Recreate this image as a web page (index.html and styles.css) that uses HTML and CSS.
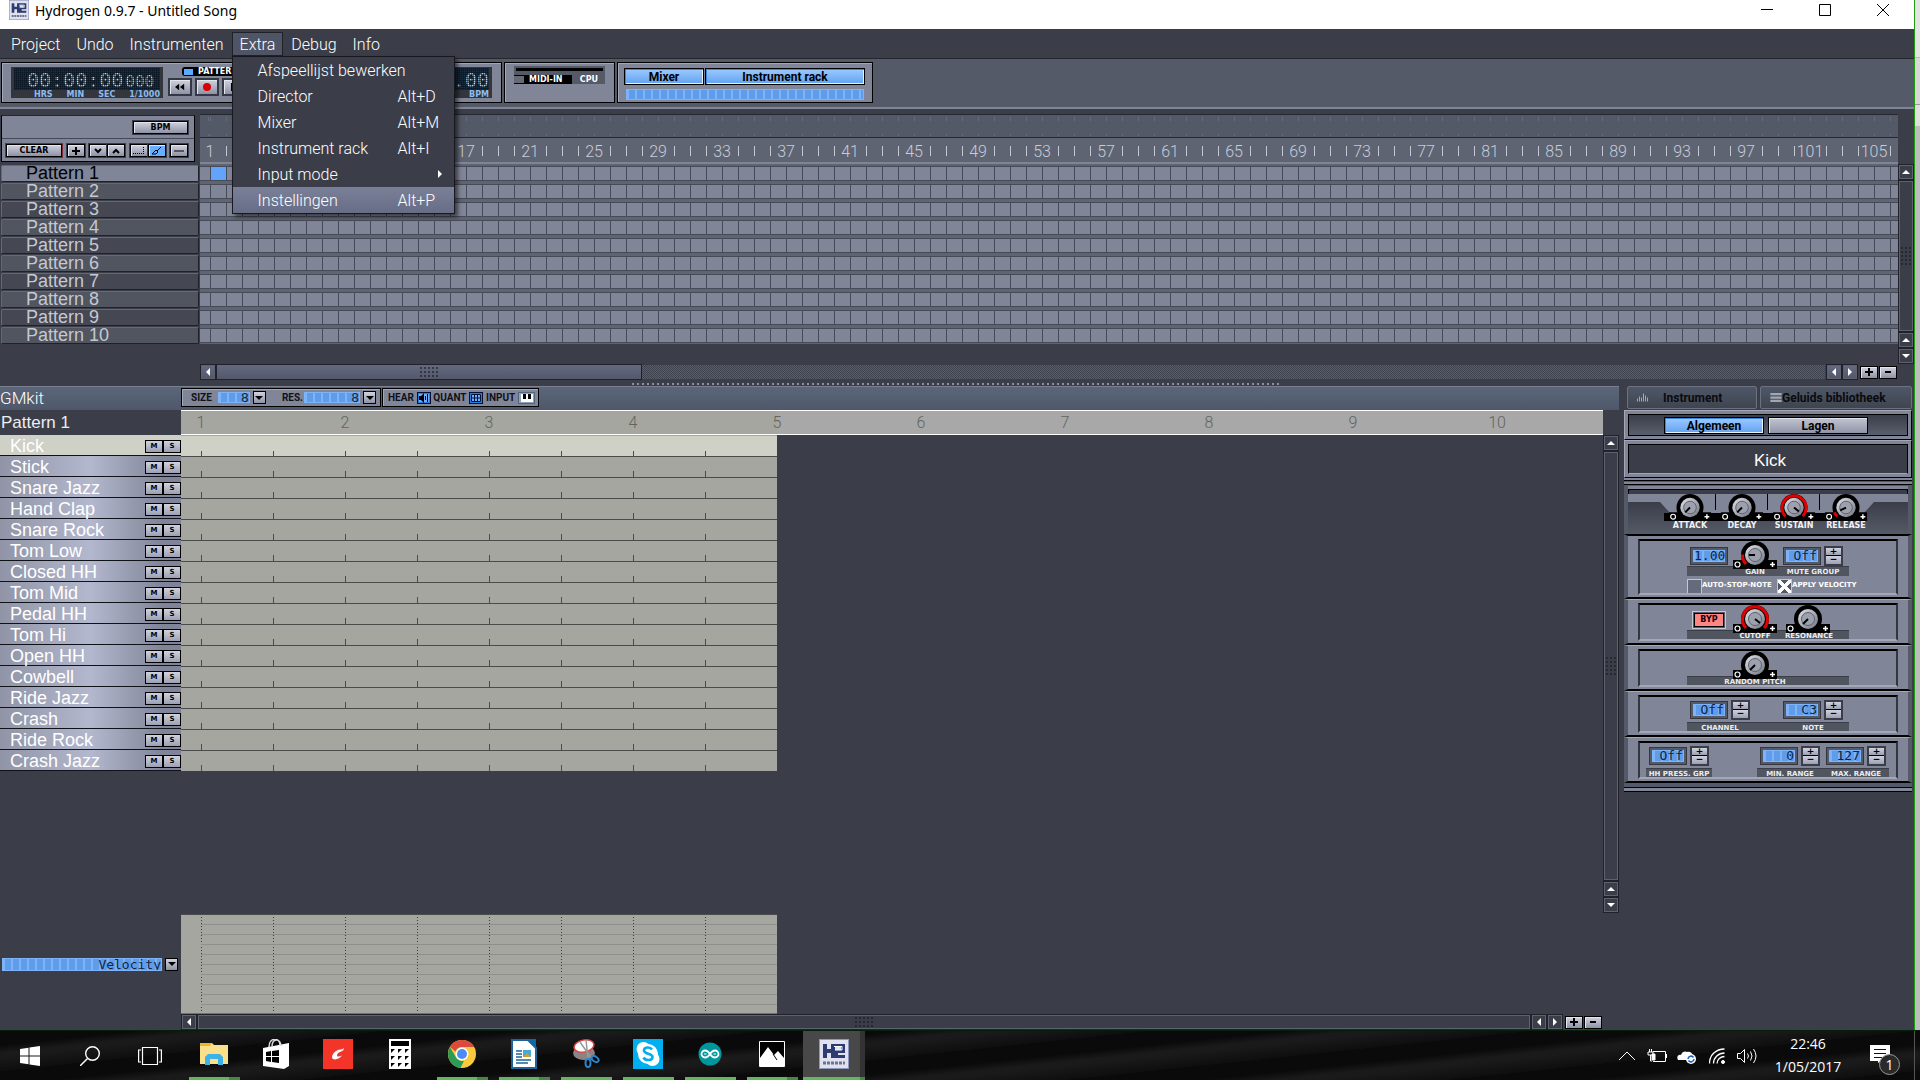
FILE: index.html
```html
<!DOCTYPE html>
<html lang="nl">
<head>
    <meta charset="UTF-8">
    <meta name="viewport" content="width=device-width, initial-scale=1.0">
    <title>Hydrogen 0.9.7 - Untitled Song</title>
    <link rel="stylesheet" href="styles.css">
</head>
<body>
    <!-- shared shapes -->
    <svg class="defs" aria-hidden="true">
        <defs>
            <linearGradient id="knob-face" x1="0" y1="0" x2="1" y2="1">
                <stop offset="0" stop-color="#e2e4ea"/>
                <stop offset="1" stop-color="#6f7380"/>
            </linearGradient>
            <symbol id="knob" viewBox="0 0 44 29">
                <path d="M0 19h44v9H0z" fill="#000"/>
                <circle cx="22" cy="14" r="14" fill="#000"/>
                <circle cx="4.500" cy="23.500" r="2.500" fill="none" stroke="#fff" stroke-width="1.200"/>
                <path d="M37 23.500h5M39.500 21v5" stroke="#fff" stroke-width="1.500"/>
            </symbol>
            <symbol id="knob-cap" viewBox="0 0 44 29">
                <circle cx="22" cy="14" r="10" fill="url(#knob-face)"/>
                <circle cx="22" cy="14" r="6.500" fill="#9da1ad" stroke="#5d616d"/>
            </symbol>
            <symbol id="h2" viewBox="0 0 30 30">
                <rect x=".5" y=".5" width="29" height="29" fill="#dfe2ee" stroke="#8d97bd"/>
                <path d="M4 5h4v5h4V5h4v14h-4v-5H8v5H4z" fill="#2c3c72"/>
                <path d="M15 5h11v9h-7v2h7v3H15v-8h7V8h-7z" fill="#2c3c72"/>
                <path d="M15 7.500h8v3.500h-7" fill="none" stroke="#fff" stroke-width="1"/>
                <path d="M4 24h22" stroke="#6b7590" stroke-width="3" stroke-dasharray="3 1"/>
            </symbol>
        </defs>
    </svg>

    <div class="desktop">
        <div class="window">
            <header class="titlebar">
                <svg class="app-icon" viewBox="0 0 30 30"><use href="#h2"/></svg>
                <span class="title">Hydrogen 0.9.7 - Untitled Song</span>
                <button class="win-btn" aria-label="Minimaliseren"><svg viewBox="0 0 12 12"><path d="M0 5.500h12"/></svg></button>
                <button class="win-btn" aria-label="Maximaliseren"><svg viewBox="0 0 12 12"><path d="M.5.5h11v11H.5z"/></svg></button>
                <button class="win-btn" aria-label="Sluiten"><svg viewBox="0 0 12 12"><path d="M0 0l12 12M12 0L0 12"/></svg></button>
            </header>

            <nav class="menubar">
                <button>Project</button>
                <button>Undo</button>
                <button>Instrumenten</button>
                <div class="menu-open">
                    <button class="active">Extra</button>
                    <ul class="dropdown">
                        <li><button><span>Afspeellijst bewerken</span></button></li>
                        <li><button><span>Director</span><kbd>Alt+D</kbd></button></li>
                        <li><button><span>Mixer</span><kbd>Alt+M</kbd></button></li>
                        <li><button><span>Instrument rack</span><kbd>Alt+I</kbd></button></li>
                        <li><button><span>Input mode</span><i class="submenu"></i></button></li>
                        <li><button class="selected"><span>Instellingen</span><kbd>Alt+P</kbd></button></li>
                    </ul>
                </div>
                <button>Debug</button>
                <button>Info</button>
            </nav>

            <section class="toolbar">
                <div class="panel player">
                    <div class="display clock">
                        <div class="dots"><span>00:00:00</span><small>000</small></div>
                        <div class="units"><span>HRS</span><span>MIN</span><span>SEC</span><span>1/1000</span></div>
                    </div>
                    <div class="transport">
                        <div class="mode"><i class="led"></i>PATTERN</div>
                        <div class="keys">
                            <button class="key" aria-label="Terug"><svg viewBox="0 0 12 8"><path d="M5 0v8L0 4zM11 0v8L6 4z"/></svg></button>
                            <button class="key" aria-label="Opnemen"><svg viewBox="0 0 8 8"><circle cx="4" cy="4" r="4" fill="#d80000"/></svg></button>
                            <button class="key" aria-label="Pauze"><svg viewBox="0 0 8 8"><path d="M1 0h2v8H1zM5 0h2v8H5z"/></svg></button>
                        </div>
                    </div>
                    <div class="display tempo">
                        <div class="dots"><span>120.00</span></div>
                        <div class="units"><span>BPM</span></div>
                    </div>
                </div>
                <div class="panel status">
                    <div class="cpu-bar"></div>
                    <div class="status-row"><span class="midi"><i></i>MIDI-IN</span><span class="cpu">CPU</span></div>
                </div>
                <div class="panel views">
                    <div class="view-buttons">
                        <button class="blue-btn mixer-btn">Mixer</button>
                        <button class="blue-btn rack-btn">Instrument rack</button>
                    </div>
                    <div class="lcd"></div>
                </div>
            </section>

            <section class="song">
                <div class="song-tools">
                    <div class="tool-row bpm-row"><button class="btn wide">BPM</button></div>
                    <div class="tool-row">
                        <button class="btn clear">CLEAR</button>
                        <button class="btn" aria-label="Nieuw patroon"><svg viewBox="0 0 16 12"><path d="M4 6h8M8 2v8"/></svg></button>
                        <span class="pair">
                            <button class="btn" aria-label="Omlaag"><svg viewBox="0 0 16 12"><path d="M5 4l3 3 3-3"/></svg></button>
                            <button class="btn" aria-label="Omhoog"><svg viewBox="0 0 16 12"><path d="M5 8l3-3 3 3"/></svg></button>
                        </span>
                        <span class="pair">
                            <button class="btn" aria-label="Selecteren"><svg viewBox="0 0 16 12"><path d="M2 8.500h10M12.500 2v8" stroke-width="1" stroke-dasharray="1 1"/></svg></button>
                            <button class="btn on" aria-label="Tekenen"><svg viewBox="0 0 16 12"><path d="M3 9h4l2-2-2-2zM8 6l4-4" stroke-width="1"/></svg></button>
                        </span>
                        <button class="btn" aria-label="Modus"><svg viewBox="0 0 16 12"><path d="M3 6h10" stroke-width="1"/></svg></button>
                    </div>
                </div>
                <div class="timeline">
                    <div class="tempo-track"></div>
                    <div class="bars" id="bars"></div>
                </div>
                <ul class="patterns" id="patterns"></ul>
                <div class="song-grid" id="song-grid"></div>
                <div class="vscroll song-vscroll">
                    <button class="arrow up" aria-label="Omhoog"></button>
                    <div class="track"><i class="grip"></i></div>
                    <button class="arrow up" aria-label="Omhoog"></button>
                    <button class="arrow down" aria-label="Omlaag"></button>
                </div>
                <div class="hscroll song-hscroll">
                    <button class="arrow left" aria-label="Links"></button>
                    <div class="track hatched"><div class="thumb"><i class="grip"></i></div></div>
                    <button class="arrow left" aria-label="Links"></button>
                    <button class="arrow right" aria-label="Rechts"></button>
                    <button class="btn zoom" aria-label="Inzoomen"><svg viewBox="0 0 16 12"><path d="M4 6h8M8 2v8"/></svg></button>
                    <button class="btn zoom" aria-label="Uitzoomen"><svg viewBox="0 0 16 12"><path d="M5 6h6"/></svg></button>
                </div>
            </section>

            <div class="splitter"></div>

            <div class="lower">
                <section class="editor">
                    <div class="kit">GMkit</div>
                    <div class="editor-bar">
                        <div class="panel">
                            <label for="size">SIZE</label>
                            <select id="size" class="lcd size"><option>8</option></select><span class="combo"></span>
                            <label for="res" class="res-label">RES.</label>
                            <select id="res" class="lcd res"><option>8</option></select><span class="combo"></span>
                        </div>
                        <div class="panel toggles">
                            <label for="hear">HEAR</label>
                            <button id="hear" class="toggle"><svg viewBox="0 0 12 10"><path d="M1 3h2l3-3v10L3 7H1zM7 3h1v4H7zM9 1h1v8H9z"/></svg></button>
                            <label for="quant">QUANT</label>
                            <button id="quant" class="toggle"><svg viewBox="0 0 12 10"><path d="M1.500 1.500h9v7h-9zM4.500 1.500v7M7.500 1.500v7M1.500 5h9" fill="none" stroke="#001038"/></svg></button>
                            <label for="input">INPUT</label>
                            <button id="input" class="toggle piano"><svg viewBox="0 0 12 10"><path d="M0 1h12v8H0z" fill="#fff"/><path d="M2 1h3v5H2zM7 1h3v5H7z"/></svg></button>
                        </div>
                    </div>
                    <div class="pattern-name">Pattern 1</div>
                    <div class="ruler"><div class="used"></div><div class="beats" id="beats"></div></div>
                    <ul class="instruments" id="instruments"></ul>
                    <div class="notes" id="notes"></div>
                    <div class="vscroll editor-vscroll">
                        <button class="arrow up" aria-label="Omhoog"></button>
                        <div class="track"><i class="grip"></i></div>
                        <button class="arrow up" aria-label="Omhoog"></button>
                        <button class="arrow down" aria-label="Omlaag"></button>
                    </div>
                    <div class="property">
                        <select class="lcd" aria-label="Eigenschap"><option>Velocity</option></select><span class="combo"></span>
                    </div>
                    <div class="velocity"></div>
                    <div class="hscroll editor-hscroll">
                        <button class="arrow left" aria-label="Links"></button>
                        <div class="track"><i class="grip"></i></div>
                        <button class="arrow left" aria-label="Links"></button>
                        <button class="arrow right" aria-label="Rechts"></button>
                        <button class="btn zoom" aria-label="Inzoomen"><svg viewBox="0 0 16 12"><path d="M4 6h8M8 2v8"/></svg></button>
                        <button class="btn zoom" aria-label="Uitzoomen"><svg viewBox="0 0 16 12"><path d="M5 6h6"/></svg></button>
                    </div>
                </section>

                <aside class="rack">
                    <div class="tabs">
                        <button class="tab"><svg viewBox="0 0 12 8"><path d="M.5 5v3M2.500 3v5M4.500 4v4M6.500 0v8M8.500 2v6M10.500 4v4"/></svg><span>Instrument</span></button>
                        <button class="tab library"><svg viewBox="0 0 10 8"><path d="M0 1h10M0 4h10M0 7h10" stroke-width="2"/></svg><span>Geluids bibliotheek</span></button>
                    </div>
                    <div class="rack-frame">
                        <div class="subtabs">
                            <button class="blue-btn">Algemeen</button>
                            <button class="blue-btn grey">Lagen</button>
                        </div>
                    </div>
                    <div class="rack-frame">
                        <div class="instrument-name">Kick</div>
                    </div>
                    <div class="rack-gap"></div>
                    <div class="envelope">
                        <div class="slot"></div>
                        <div class="knobs">
                            <div class="shelf"></div>
                            <div class="env">
                                <svg class="knob" viewBox="0 0 44 29"><use href="#knob"/><use href="#knob-cap"/><path class="hand" d="M22 14l-5 5"/></svg>
                                <span>ATTACK</span>
                            </div>
                            <div class="env">
                                <svg class="knob" viewBox="0 0 44 29"><use href="#knob"/><use href="#knob-cap"/><path class="hand" d="M22 14l-5 5"/></svg>
                                <span>DECAY</span>
                            </div>
                            <div class="env">
                                <svg class="knob" viewBox="0 0 44 29"><use href="#knob"/><path class="arc" d="M13 23a12.500 12.500 0 1 1 18 0"/><use href="#knob-cap"/><path class="hand" d="M22 14l5 4"/></svg>
                                <span>SUSTAIN</span>
                            </div>
                            <div class="env">
                                <svg class="knob" viewBox="0 0 44 29"><use href="#knob"/><path class="arc" d="M13 23a12.500 12.500 0 0 1-3-4"/><use href="#knob-cap"/><path class="hand" d="M22 14l-6 3"/></svg>
                                <span>RELEASE</span>
                            </div>
                        </div>
                    </div>

                    <div class="rack-section">
                        <div class="rack-box">
                            <div class="controls three">
                                <span class="lcd-frame"><output class="lcd">1.00</output></span>
                                <svg class="knob" viewBox="0 0 44 29"><use href="#knob"/><path class="arc" d="M13 23a12.500 12.500 0 0 1-3.500-9.500"/><use href="#knob-cap"/><path class="hand" d="M22 14h-6"/></svg>
                                <span class="stepper"><span class="lcd-frame"><output class="lcd">Off</output></span><span class="spin"><button>+</button><button>−</button></span></span>
                            </div>
                            <div class="plate three"><span></span><span>GAIN</span><span>MUTE GROUP</span></div>
                            <div class="checks">
                                <label><input type="checkbox">AUTO-STOP-NOTE</label>
                                <label><input type="checkbox" checked>APPLY VELOCITY</label>
                            </div>
                        </div>
                    </div>

                    <div class="rack-section">
                        <div class="rack-box">
                            <div class="controls three">
                                <button class="bypass">BYP</button>
                                <svg class="knob" viewBox="0 0 44 29"><use href="#knob"/><path class="arc" d="M13 23a12.500 12.500 0 1 1 18 0"/><use href="#knob-cap"/><path class="hand" d="M22 14l5 4"/></svg>
                                <svg class="knob centred" viewBox="0 0 44 29"><use href="#knob"/><use href="#knob-cap"/><path class="hand" d="M22 14l-5 5"/></svg>
                            </div>
                            <div class="plate three"><span></span><span>CUTOFF</span><span class="near">RESONANCE</span></div>
                        </div>
                    </div>

                    <div class="rack-section">
                        <div class="rack-box">
                            <div class="controls three">
                                <span></span>
                                <svg class="knob" viewBox="0 0 44 29"><use href="#knob"/><use href="#knob-cap"/><path class="hand" d="M22 14l-5 5"/></svg>
                            </div>
                            <div class="plate three"><span></span><span>RANDOM PITCH</span></div>
                        </div>
                    </div>

                    <div class="rack-section">
                        <div class="rack-box">
                            <div class="controls two">
                                <span class="stepper"><span class="lcd-frame"><output class="lcd">Off</output></span><span class="spin"><button>+</button><button>−</button></span></span>
                                <span class="stepper"><span class="lcd-frame"><output class="lcd">C3</output></span><span class="spin"><button>+</button><button>−</button></span></span>
                            </div>
                            <div class="plate two"><span>CHANNEL</span><span>NOTE</span></div>
                        </div>
                    </div>

                    <div class="rack-section">
                        <div class="rack-box ranges">
                            <div class="range">
                                <span class="stepper"><span class="lcd-frame"><output class="lcd">Off</output></span><span class="spin"><button>+</button><button>−</button></span></span>
                                <span class="plate">HH PRESS. GRP</span>
                            </div>
                            <div class="range">
                                <span class="stepper"><span class="lcd-frame"><output class="lcd">0</output></span><span class="spin"><button>+</button><button>−</button></span></span>
                                <span class="plate">MIN. RANGE</span>
                            </div>
                            <div class="range">
                                <span class="stepper"><span class="lcd-frame"><output class="lcd">127</output></span><span class="spin"><button>+</button><button>−</button></span></span>
                                <span class="plate">MAX. RANGE</span>
                            </div>
                        </div>
                    </div>
                    <div class="rack-foot"></div>
                </aside>
            </div>
        </div>
        <div class="behind"></div>
    </div>

    <footer class="taskbar">
        <button class="sys" aria-label="Start"><svg width="20" height="20" viewBox="0 0 20 20" fill="#fff"><path d="M0 3l8.500-1.200V9.500H0zM9.500 1.600L20 0v9.500H9.500zM0 10.500h8.500v7.700L0 17zM9.500 10.500H20V20L9.500 18.400z"/></svg></button>
        <button class="sys" aria-label="Zoeken"><svg width="20" height="20" viewBox="0 0 20 20" fill="none" stroke="#fff" stroke-width="1.400"><circle cx="12.500" cy="7.500" r="6.800"/><path d="M7.500 12.500L0 20"/></svg></button>
        <button class="sys" aria-label="Taakweergave"><svg width="24" height="18" viewBox="0 0 24 18" fill="none" stroke="#fff" stroke-width="1.200"><path d="M4.500.5h15v17h-15zM3 3H.6v12H3M21 3h2.400v12H21"/></svg></button>
        <div class="apps">
            <button class="app running more" aria-label="Verkenner"><svg width="28" height="24" viewBox="0 0 28 24"><path d="M0 1h12l2 2h14v19H0z" fill="#fbe08c"/><path d="M0 1h12l-2 3H0z" fill="#f0b429"/><path d="M5 23v-8l3-3h12l3 3v8h-5v-6h-8v6z" fill="#3cb2e6"/></svg></button>
            <button class="app" aria-label="Store"><svg width="26" height="30" viewBox="0 0 26 30"><path d="M0 9l26-5v23l-5 3L0 27z" fill="#fff"/><path d="M6 8c0-10 11-10 11-2M9 8c0-9 8-9 9-1" fill="none" stroke="#ddd" stroke-width="1.500"/><path d="M3 13l5-1v5H3zM9 12l7-1v6H9zM3 18h5v5l-5-1zM9 18h7v6l-7-1z" fill="#000"/></svg></button>
            <button class="app" aria-label="Cashback"><svg width="30" height="30" viewBox="0 0 30 30"><path d="M0 0h30v30H0z" fill="#f23528"/><path d="M19 10.500c-7-1-12 7-9 9.500 3 1.500 7-1 9-3.500-3 1.500-5 1.500-5-.5 0-1.500 2-3 4.500-3.500z" fill="#fff"/><path d="M18 11l3-2-1 3z" fill="#fff"/></svg></button>
            <button class="app" aria-label="Rekenmachine"><svg width="22" height="30" viewBox="0 0 22 30"><path d="M0 0h22v30H0z" fill="#fff"/><path d="M2 2h18v5H2zM2 10h4l-4 4zM9 10h4l-4 4zM16 10h4l-4 4zM2 17h4l-4 4zM9 17h4l-4 4zM16 17h4l-4 4zM2 24h4l-4 4zM9 24h4l-4 4zM16 24h4l-4 4z" fill="#000"/></svg></button>
            <button class="app running more" aria-label="Chrome"><svg width="28" height="28" viewBox="0 0 28 28"><circle cx="14" cy="14" r="14" fill="#fbc93c"/><path d="M2 7a14 14 0 0 1 24.300 0H14a7 7 0 0 0-6.500 4.500z" fill="#dc4a3d"/><path d="M2 7l6 10.500c1 2 4 4 8 3.300L12.500 28A14 14 0 0 1 2 7z" fill="#2a9c57"/><circle cx="14" cy="14" r="6.500" fill="#fff"/><circle cx="14" cy="14" r="5" fill="#4c8bf5"/></svg></button>
            <button class="app running more" aria-label="Writer"><svg width="26" height="30" viewBox="0 0 26 30"><path d="M2 1h15l8 8v20H1V1z" fill="#fff" stroke="#1c6499" stroke-width="2"/><path d="M17 0h8v9z" fill="#0c6aa8"/><path d="M5 12h6M5 15h6M5 18h6M5 21h15M5 24h12" stroke="#1c6499" stroke-width="1.500"/><path d="M12 11h8v7h-8z" fill="#48a9d8"/><path d="M12 18l4-4 4 4z" fill="#c9a227"/></svg></button>
            <button class="app running" aria-label="Knipprogramma"><svg width="28" height="30" viewBox="0 0 28 30"><ellipse cx="12" cy="14" rx="11" ry="7" fill="#8b8386"/><ellipse cx="12" cy="7" rx="10" ry="6" fill="#fff" stroke="#d44" stroke-width="1.500" transform="rotate(-12 12 7)"/><path d="M8 3l12 17M14 1l2 19" stroke="#999" stroke-width="1.500"/><g fill="none" stroke="#2a86cc" stroke-width="2"><ellipse cx="16" cy="24" rx="2.500" ry="4"/><ellipse cx="23" cy="20" rx="4" ry="2.500" transform="rotate(35 23 20)"/></g></svg></button>
            <button class="app running" aria-label="Skype"><svg width="30" height="30" viewBox="0 0 30 30"><path d="M0 0h30v30H0z" fill="#00aff0"/><circle cx="10.500" cy="10" r="7" fill="#fff"/><circle cx="19.500" cy="20" r="7" fill="#fff"/><circle cx="15" cy="15" r="10" fill="#fff"/><path d="M19 10.500c-2-3-8-2.500-8 1 0 4 8.500 2.500 8.500 6.500 0 4-7 4-9 .5" fill="none" stroke="#00aff0" stroke-width="2.600"/></svg></button>
            <button class="app running" aria-label="Arduino"><svg width="24" height="24" viewBox="0 0 24 24"><circle cx="12" cy="12" r="11.500" fill="#00979c"/><path d="M12 12c-2-3-3.500-3.500-5-3.500a3.500 3.500 0 0 0 0 7c1.500 0 3-.5 5-3.500s3.500-3.500 5-3.500a3.500 3.500 0 0 1 0 7c-1.500 0-3-.5-5-3.500z" fill="none" stroke="#fff" stroke-width="1.800"/><path d="M6 12h2.500M15.500 12H18" stroke="#fff"/></svg></button>
            <button class="app running more" aria-label="Foto's"><svg width="26" height="26" viewBox="0 0 26 26"><path d="M.5.5h25v25H.5z" fill="#000" stroke="#fff"/><path d="M1 17l8-11 6 8 4-4 6 7v8H1z" fill="#fff"/><path d="M14 13l4 6" stroke="#000"/></svg></button>
            <button class="app running more current" aria-label="Hydrogen"><svg width="30" height="30" viewBox="0 0 30 30"><use href="#h2"/></svg></button>
        </div>
        <div class="tray">
            <button aria-label="Verborgen pictogrammen"><svg width="16" height="10" viewBox="0 0 16 10"><path d="M0 9l8-8 8 8"/></svg></button>
            <button aria-label="Batterij"><svg width="20" height="14" viewBox="0 0 20 14"><path d="M6 2.500h12.500v10H6M19.500 5v4M1 3h5v3H1zM2.500 0v3M4.500 0v3M3.500 6v6H5"/><path d="M5 5h3v6H5z" fill="#fff"/></svg></button>
            <button aria-label="OneDrive"><svg width="20" height="16" viewBox="0 0 20 16"><path d="M1 12c-2-4 1-6 3-5 1-4 5-4 6-3 4-1 6 2 5 4 2 0 2 4 0 4z" fill="#fff" stroke="none"/><circle cx="14" cy="11" r="5" fill="#fff" stroke="none"/><path d="M11 11a3 3 0 0 1 5.500-1.500M17 11a3 3 0 0 1-5.500 1.500" stroke="#1c62c4" stroke-width="1.500"/></svg></button>
            <button aria-label="Wi-Fi"><svg width="16" height="16" viewBox="0 0 16 16"><path d="M.5 15.500C.5 7 7 1 15.500 1M4.500 15.500c0-6 5-10.500 11-10.500M8 15.500c0-4 3.500-7 7.500-7" stroke-width="1.300"/><circle cx="14" cy="14" r="1.500" fill="#fff"/></svg></button>
            <button aria-label="Volume"><svg width="20" height="16" viewBox="0 0 20 16"><path d="M.5 5.500h3l4-4v13l-4-4h-3zM10.500 5.500q2 2.500 0 5M13.500 3.500q3 4.500 0 9M16.500 1q5 7 0 14"/></svg></button>
            <div class="time"><span>22:46</span><span>1/05/2017</span></div>
            <button class="notify" aria-label="Meldingen"><svg width="20" height="18" viewBox="0 0 20 18"><path d="M0 0h20v16h-9l-3 2v-2H0z" fill="#fff" stroke="none"/><path d="M4 4.500h12M4 8.500h12M4 12.500h8" stroke="#111"/></svg><span class="badge">1</span></button>
        </div>
    </footer>

    <script src="script.js"></script>
</body>
</html>
```

FILE: styles.css
```css
* {
    box-sizing: border-box;
}

body {
    margin: 0;
    min-height: 100vh;
    display: flex;
    flex-direction: column;
    background: #3b3e49;
    color: #fff;
    font-family: "Liberation Sans", Arial, sans-serif;
    font-size: 16px;
}

button, select {
    margin: 0;
    padding: 0;
    border: 0;
    border-radius: 0;
    background: none;
    color: inherit;
    font: inherit;
}

ul {
    margin: 0;
    padding: 0;
    list-style: none;
}

svg {
    display: block;
}

.defs {
    position: absolute;
    width: 0;
    height: 0;
}

.desktop {
    display: flex;
    flex: 1;
}

.window {
    display: flex;
    flex-direction: column;
    flex: 1;
    min-width: 0;
    border-right: 1px solid #1f9a12;
}

.behind {
    width: 5px;
    background: linear-gradient(#e4e4e4 0 57px, #bbb 57px 58px, #d8d8d8 58px 104px, #999 104px 105px, #e0e0e0 105px 126px, #bdbdbd 126px);
}

/* title bar */
.titlebar {
    display: flex;
    height: 29px;
    padding-right: 2px;
    background: #fff;
    color: #000;
    font-family: "Noto Sans", sans-serif;
    font-size: 14px;
}

.app-icon {
    width: 20px;
    height: 20px;
    margin: 0 6px 0 9px;
}

.title {
    flex: 1;
    line-height: 21px;
}

.win-btn {
    display: flex;
    justify-content: center;
    width: 58px;
    padding-top: 4px;
}

.win-btn svg {
    width: 12px;
    height: 12px;
    fill: none;
    stroke: #000;
}

/* menu */
.menubar {
    display: flex;
    align-items: flex-start;
    height: 30px;
    padding: 3px;
    border-bottom: 1px solid #25272f;
    font-family: Roboto, "Liberation Sans", sans-serif;
    font-weight: 300;
    font-size: 16px;
}

.menubar > button, .menu-open > button {
    height: 24px;
    padding: 0 7px;
    border: 1px solid transparent;
}

.menu-open {
    position: relative;
}

.menu-open > .active {
    background: #4f5466;
    border-color: #20222a;
}

.dropdown {
    position: absolute;
    z-index: 5;
    top: 24px;
    left: 0;
    width: 223px;
    border: 1px solid #17191f;
    background: #3b3e49;
    box-shadow: 3px 3px 4px #0008;
}

.dropdown button {
    display: flex;
    align-items: center;
    width: 100%;
    height: 26px;
    padding: 0 16px 0 25px;
    text-align: left;
}

.dropdown span {
    flex: 1;
}

.dropdown kbd {
    width: 40px;
    font: inherit;
}

.dropdown .selected {
    background: linear-gradient(#7b8099, #666d85);
}

.submenu {
    margin-right: -8px;
    border: 4px solid transparent;
    border-left-color: #fff;
}

/* toolbar */
.toolbar {
    display: flex;
    gap: 2px;
    height: 50px;
    padding: 3px 0 4px 1px;
    background: #555a68;
    border-bottom: 2px solid #7f8496;
}

.panel {
    background: #808597;
    border: 1px solid #000;
    box-shadow: inset 1px 1px #a4a8b6;
}

.player {
    display: flex;
    width: 501px;
    padding: 4px 9px;
}

.display {
    background: #33363b;
    padding: 1px 3px;
    color: #b8e0f8;
}

.display .dots {
    position: relative;
    display: flex;
    align-items: baseline;
    justify-content: flex-end;
    height: 22px;
    background: #16304a;
    font-family: "DejaVu Sans Mono", monospace;
    font-size: 20px;
    line-height: 24px;
}

.display .dots::after {
    content: "";
    position: absolute;
    inset: 0;
    background: repeating-linear-gradient(90deg, #0b131d90 0 1px, transparent 1px 2px), repeating-linear-gradient(#0b131d90 0 1px, transparent 1px 2px);
}

.clock .dots {
    justify-content: flex-start;
    gap: 2px;
    padding-left: 13px;
}

.dots small {
    font-size: 16px;
}

.units {
    display: flex;
    justify-content: space-between;
    padding-left: 20px;
    color: #8cbcf0;
    font: bold 8px/10px "DejaVu Sans", sans-serif;
}

.clock {
    width: 152px;
}

.transport {
    padding-left: 5px;
}

.mode {
    display: flex;
    align-items: center;
    width: 90px;
    height: 9px;
    margin-left: 14px;
    background: #000;
    border-radius: 3px;
    font: bold 8px "DejaVu Sans", sans-serif;
}

.led {
    width: 9px;
    height: 6px;
    margin: 0 5px 0 2px;
    background: #5aaaff;
}

.keys {
    display: flex;
    gap: 3px;
    padding-top: 2px;
}

.key, .btn {
    display: flex;
    align-items: center;
    justify-content: center;
    background: linear-gradient(#d0d2de, #8e92a6);
    border: 1px solid #000;
    color: #000;
    box-shadow: inset 1px 1px #e4e6ee;
}

.key {
    width: 24px;
    height: 18px;
    border: 2px solid #343844;
}

.key svg {
    width: 10px;
    height: 8px;
}

.tempo {
    margin-left: auto;
    width: 90px;
}

.tempo .units {
    justify-content: flex-end;
}

.status {
    width: 111px;
    padding: 3px 9px;
    font: bold 8px/9px "DejaVu Sans", sans-serif;
}

.cpu-bar {
    height: 7px;
    background: #000;
    border: 2px solid #555a68;
}

.status-row {
    display: flex;
    align-items: center;
    justify-content: space-between;
    padding-top: 2px;
    background: #555a68;
}

.midi {
    display: flex;
    align-items: center;
    gap: 5px;
    width: 58px;
    background: #000;
}

.midi i {
    width: 10px;
    height: 7px;
    background: #666a74;
}

.cpu {
    padding-right: 7px;
}

.views {
    width: 256px;
    padding: 5px 7px 0 6px;
}

.view-buttons {
    display: flex;
    gap: 1px;
}

.blue-btn {
    height: 17px;
    background: linear-gradient(#9ccaff, #62a2f0);
    border: 1px solid #000;
    box-shadow: inset 1px 1px #3a86e0, inset -1px -1px #e8f2ff;
    color: #000;
    font: bold 12px/14px Roboto, "Liberation Sans", sans-serif;
}

.mixer-btn {
    width: 80px;
}

.rack-btn {
    flex: 1;
}

.lcd {
    height: 11px;
    background: repeating-linear-gradient(90deg, #7fb3f7 0 2px, #5f9dea 2px 8px);
    border: 1px solid #7fb3f7;
    color: #10243e;
    font: 13px/10px "DejaVu Sans Mono", monospace;
    text-align: right;
}

.views .lcd {
    margin: 4px 1px 0 2px;
}

/* song editor */
.song {
    display: grid;
    grid-template-columns: 200px 1fr 16px;
    grid-template-rows: 55px 180px 36px;
}

.song-tools {
    grid-area: 1 / 1;
    margin: 6px 5px 2px 1px;
    background: #808597;
    border: 1px solid #000;
    border-top-color: #25272f;
}

.tool-row {
    display: flex;
    align-items: center;
    justify-content: space-between;
    height: 23px;
    padding: 0 6px 0 4px;
}

.tool-row.bpm-row {
    justify-content: flex-end;
    border-bottom: 1px solid #444857;
}

.btn {
    width: 18px;
    height: 13px;
    font: bold 8px "DejaVu Sans", sans-serif;
    outline: 1px solid #3a3d49;
}

.btn svg {
    width: 16px;
    height: 12px;
    fill: none;
    stroke: #000;
    stroke-width: 2;
}

.wide {
    width: 55px;
}

.clear {
    width: 56px;
    outline-color: #7d2a31;
}

.btn.on {
    background: #6aaeff;
}

.pair {
    display: flex;
}

.timeline {
    grid-area: 1 / 2;
    margin-top: 5px;
    border-top: 1px solid #25272f;
    overflow: hidden;
}

.tempo-track {
    height: 23px;
    background: repeating-linear-gradient(90deg, #666b7a 0 1px, transparent 1px 16px) 10px 2px / 100% 4px repeat-x, repeating-linear-gradient(90deg, #666b7a 0 1px, transparent 1px 16px) 10px 19px / 100% 2px repeat-x, #545967;
    border-bottom: 1px solid #25272f;
}

.bars {
    display: flex;
    height: 26px;
    margin-left: -22px;
    background: repeating-linear-gradient(90deg, #c4c8d2 0 1px, transparent 1px 16px) 0 8px / 100% 10px no-repeat, #5f6473;
    border-bottom: 2px solid #808597;
    color: #c8ccd8;
    font: 300 16px/27px Roboto, "Liberation Sans", sans-serif;
}

.bars div {
    flex: 0 0 64px;
    text-align: center;
}

.bars span {
    padding: 0 1px;
    background: #5f6473;
}

.patterns {
    grid-area: 2 / 1;
}

.patterns li {
    height: 17px;
    margin: 1px 1px 0;
    padding-left: 24px;
    background: #454852;
    border: 1px solid #20222a;
    border-top-color: #646978;
    border-left-color: #646978;
    border-radius: 2px;
    color: #c4c8d2;
    font-size: 18px;
    line-height: 15px;
}

.patterns li:nth-child(even) {
    background: #50555f;
}

.patterns li.active {
    background: #808597;
    color: #000;
}

.song-grid {
    grid-area: 2 / 2;
    padding-top: 2px;
    background: #5f6473;
    overflow: hidden;
}

.song-row {
    display: flex;
    height: 15px;
    margin-bottom: 3px;
    padding-left: 11px;
    background: repeating-linear-gradient(90deg, transparent 0 10px, #474a57 10px 11px, transparent 11px 16px), #808597;
    border-top: 1px solid #474a57;
    border-bottom: 1px solid #474a57;
}

.cell {
    width: 15px;
    background: #62a4fa;
}

/* scroll bars */
.vscroll, .hscroll {
    display: flex;
    gap: 2px;
    padding: 1px;
}

.vscroll {
    flex-direction: column;
}

.song-vscroll {
    grid-area: 2 / 3 / 4 / 4;
    margin-bottom: 16px;
}

.arrow, .track {
    display: flex;
    align-items: center;
    justify-content: center;
    background: #3b3e49;
    border: 1px solid #5d6172;
    outline: 1px solid #20222a;
}

.arrow {
    flex: none;
    width: 14px;
    height: 14px;
}

.arrow::before {
    content: "";
    border: 4px solid transparent;
}

.arrow.up::before {
    margin-bottom: 4px;
    border-bottom-color: #fff;
}

.arrow.down::before {
    margin-top: 4px;
    border-top-color: #fff;
}

.arrow.left::before {
    margin-right: 4px;
    border-right-color: #fff;
}

.arrow.right::before {
    margin-left: 4px;
    border-left-color: #fff;
}

.track {
    flex: 1;
}

.grip {
    width: 19px;
    height: 11px;
    background: radial-gradient(circle at 1px 1px, #191b22 1px, transparent 1px) 0 0 / 4px 4px;
    opacity: .6;
}

.vscroll .grip {
    width: 11px;
    height: 19px;
}

.song-hscroll {
    grid-area: 3 / 2;
    align-self: end;
    height: 16px;
}

.song-hscroll .arrow, .thumb {
    background: linear-gradient(#646980, #53586b);
}

.hatched {
    justify-content: flex-start;
    border: 0;
    outline: 0;
    background: repeating-conic-gradient(#585c6c 0 25%, #3f424f 0 50%) 0 0 / 2px 2px;
}

.thumb {
    display: flex;
    align-items: center;
    justify-content: center;
    width: calc(26% + 6px);
    height: 14px;
    outline: 1px solid #20222a;
}

.zoom {
    align-self: center;
    margin-left: 1px;
    outline: 0;
}

.zoom + .zoom {
    margin-left: -1px;
}

.splitter {
    height: 6px;
    margin: 0 33%;
    padding: 3px 0 1px;
    background: linear-gradient(90deg, #8d92a0 2px, transparent 2px) 0 0 / 5px 2px repeat-x content-box;
}

/* pattern editor */
.lower {
    display: flex;
    flex: 1;
    gap: 5px;
}

.editor {
    flex: 1;
    min-width: 0;
    display: grid;
    grid-template-columns: 181px 1fr 16px;
    grid-template-rows: 24px 25px 1fr 100px 16px;
}

.kit, .editor-bar {
    border-top: 1px solid #7b8090;
    background: linear-gradient(#5c667a, #4e586a);
}

.kit {
    font: 300 17px/23px Roboto, "Liberation Sans", sans-serif;
}

.editor-bar {
    grid-column: 2 / 4;
    display: flex;
    gap: 1px;
    padding: 1px 0 3px;
    color: #101218;
}

.editor-bar .panel {
    display: flex;
    align-items: center;
    width: 200px;
    padding: 0 4px 0 9px;
}

.editor-bar label {
    font: bold 10px Roboto, sans-serif;
}

.editor-bar .toggles {
    width: 157px;
    justify-content: space-between;
    padding: 0 3px 0 5px;
}

select.lcd {
    appearance: none;
    direction: rtl;
}

.size {
    width: 32px;
    margin-left: auto;
}

.res {
    width: 56px;
    margin-left: 1px;
}

.res-label {
    margin-left: 16px;
}

.combo {
    display: flex;
    align-items: center;
    justify-content: center;
    width: 13px;
    height: 13px;
    margin-left: 3px;
    background: linear-gradient(#d0d2de, #8e92a6);
    border: 1px solid #000;
}

.combo::before {
    content: "";
    border: 4px solid transparent;
    border-top-color: #000;
    border-bottom: 0;
}

.toggle {
    width: 14px;
    height: 12px;
    border: 1px solid #001038;
    background: #6ab0ff;
    box-shadow: inset 0 0 0 1px #2a7de0;
}

.toggle svg {
    width: 12px;
    height: 10px;
}

.piano {
    width: 17px;
    padding-left: 2px;
    background: #8ea2ba;
    border-color: #50657f;
    box-shadow: none;
}

.pattern-name {
    padding-left: 1px;
    font-size: 17px;
    line-height: 25px;
    color: #eceef2;
}

.ruler {
    grid-area: 2 / 2;
    position: relative;
    display: flex;
    background: #a8a8a8;
    border-top: 1px solid #fff;
    border-bottom: 1px solid #fff;
    overflow: hidden;
}

.used {
    width: 596px;
    background: #a5a6a0;
}

.beats {
    position: absolute;
    top: 0;
    left: -52px;
    display: flex;
    color: #62645f;
    font: 300 16px/23px Roboto, "Liberation Sans", sans-serif;
}

.beats span {
    width: 144px;
    text-align: center;
}

.instruments {
    grid-area: 3 / 1;
}

.instruments li {
    display: flex;
    align-items: center;
    height: 21px;
    padding-left: 10px;
    border-bottom: 1px solid #101218;
    background: linear-gradient(90deg, #9094a6, #b4b8ce 50%, #7f8498 90%);
    font-size: 18px;
    line-height: 20px;
}

.instruments li.active {
    background: #cfd0c6;
}

.instruments span {
    flex: 1;
    padding-top: 2px;
    line-height: 18px;
}

.instruments button {
    width: 18px;
    height: 13px;
    margin-top: 2px;
    border: 1px solid #000;
    background: linear-gradient(#d0d2de, #9ca0b2);
    color: #000;
    font: bold 7px/10px "DejaVu Sans", sans-serif;
}

.notes {
    grid-area: 3 / 2;
}

.note-row {
    width: 596px;
    height: 21px;
    background: #a5a6a0;
    border-bottom: 1px solid #4a4b4b;
    padding: 14px 0 0 20px;
}

.note-row::before {
    content: "";
    display: block;
    height: 6px;
    background: repeating-linear-gradient(90deg, #4a4b4b 0 1px, transparent 1px 72px);
}

.note-row:first-child {
    height: 22px;
    padding-top: 15px;
    background: #cfd0c6;
    border-top: 1px solid #a5a6a0;
}

.note-row:last-child {
    height: 20px;
    border-bottom: 0;
}

.editor-vscroll {
    grid-area: 3 / 3;
    margin-bottom: 1px;
}

.property {
    grid-area: 4 / 1;
    display: flex;
    align-items: center;
    padding-left: 2px;
}

.property .lcd {
    width: 160px;
    height: 13px;
    line-height: 11px;
}

.velocity {
    grid-area: 4 / 2;
    width: 596px;
    padding-left: 20px;
    border-top: 1px solid #4a4b4b;
    border-bottom: 1px solid #707270;
    background: #a5a6a0;
}

.velocity::before {
    content: "";
    display: block;
    height: 100%;
    background:
        repeating-linear-gradient(transparent 0 9px, #8f908c 9px 10px),
        repeating-linear-gradient(#a5a6a0 0 2px, transparent 2px 3px),
        repeating-linear-gradient(90deg, #3c3d3d 0 1px, #a5a6a0 1px 72px);
}

.editor-hscroll {
    grid-area: 5 / 2;
}

/* instrument rack */
.rack {
    flex: 0 0 290px;
    padding-right: 2px;
}

.tabs {
    display: flex;
    gap: 3px;
    height: 24px;
    padding-left: 3px;
}

.tab {
    display: flex;
    align-items: center;
    flex: 0 0 130px;
    height: 23px;
    padding-left: 9px;
    border: 1px solid #6c7180;
    border-radius: 2px;
    background: linear-gradient(#4f5868, #3f444f);
    color: #0a0b0e;
    font: bold 12px Roboto, "Liberation Sans", sans-serif;
}

.tab svg {
    width: 12px;
    height: 9px;
    margin-right: 14px;
    stroke: #a2a6b2;
}

.library {
    flex: 1;
}

.library svg {
    margin-right: 0;
}

.rack-frame {
    padding: 3px;
    background: #808597;
    border: 1px solid #000;
    border-left-color: #a4a8b6;
    border-top-color: #a4a8b6;
}

.subtabs {
    display: flex;
    justify-content: center;
    gap: 4px;
    height: 22px;
    padding: 2px 4px 0 0;
    border: 1px solid #000;
    background: linear-gradient(#3b3e49, #5a5f6d);
}

.subtabs .blue-btn {
    width: 100px;
}

.blue-btn.grey {
    background: linear-gradient(#c2c4d2, #9195a8);
    box-shadow: inset 1px 1px #e0e2ea;
}

.instrument-name {
    height: 30px;
    padding-left: 4px;
    border: 1px solid #000;
    border-bottom-color: #a4a8b6;
    background: #3b3e49;
    text-align: center;
    font-size: 17px;
    line-height: 31px;
}

.rack-gap {
    height: 8px;
    background: repeating-linear-gradient(#808597 0 2px, #000 2px 3px, #555a68 3px 4px);
}

.envelope {
    height: 48px;
    padding-top: 3px;
    border-left: 4px solid #555a68;
    border-right: 4px solid #555a68;
    background: #808597;
}

.slot {
    height: 5px;
    border: 1px solid #000;
    border-bottom: 0;
    background: #3b3e49;
}

.knobs {
    position: relative;
    display: flex;
    justify-content: center;
    height: 40px;
    background: linear-gradient(#808597 8px, #3b3e49 8px, #555a68);
}

.shelf {
    position: absolute;
    inset: 0 34px auto 32px;
    height: 24px;
    background: #808597;
    clip-path: polygon(0 8px, 10px 19px, 204px 19px, 214px 8px, 214px 0, 0 0);
}

.env {
    position: relative;
    display: flex;
    flex-direction: column;
    align-items: center;
    width: 52px;
    background: linear-gradient(#000, #000) right 0 / 1px 16px no-repeat, linear-gradient(#000, #000) 0 19px / 100% 8px no-repeat;
}

.env:last-child {
    background: linear-gradient(#000, #000) 0 19px / 46px 8px no-repeat;
}

.env span {
    color: #f0f2f6;
    font: bold 8px/8px "DejaVu Sans", sans-serif;
}

.knob {
    flex: none;
    width: 44px;
    height: 29px;
}

.env .knob {
    height: 28px;
}

.hand {
    stroke: #000;
    stroke-width: 2;
}

.arc {
    fill: none;
    stroke: #e00000;
    stroke-width: 3;
}

.rack-section {
    height: 46px;
    padding: 3px 10px 2px;
    border-left: 4px solid #555a68;
    border-right: 4px solid #555a68;
    border-top: 1px solid #a4a8b6;
    border-bottom: 2px solid #000;
    background: #808597;
}

.envelope + .rack-section {
    height: 65px;
    border-top: 2px solid #000;
}

.rack-box {
    height: 100%;
    padding: 0 1px;
    border: 2px solid #33363f;
    border-top-color: #000;
    border-bottom-color: #a4a8b6;
    overflow: hidden;
}

.controls, .plate {
    width: 162px;
    margin: 0 auto;
}

.controls {
    display: grid;
    align-items: center;
    height: 25px;
}

.three {
    display: grid;
    grid-template-columns: 46px 44px 72px;
}

.two {
    display: grid;
    grid-template-columns: 66px 72px;
    justify-content: space-between;
}

.plate {
    height: 10px;
    background: #50555f;
    border-top: 1px solid #3b3e49;
    color: #eceef2;
    font: bold 7px/10px "DejaVu Sans", sans-serif;
    text-align: center;
    white-space: nowrap;
}

.plate span {
    display: flex;
    justify-content: center;
}

.plate .near {
    padding-right: 8px;
}

.lcd-frame {
    display: block;
    width: 38px;
    margin-left: 3px;
    padding: 2px;
    background: #555a68;
    border: 1px solid #33363f;
}

.lcd-frame .lcd {
    display: block;
    height: 12px;
}

.stepper {
    display: flex;
    align-items: center;
    gap: 3px;
}

.three .stepper, .two .stepper:last-child {
    padding-left: 3px;
}

.spin {
    display: flex;
    flex-direction: column;
    width: 19px;
    height: 20px;
    border: 2px solid #3a3d49;
    background: #000;
}

.spin button {
    flex: 1;
    height: 8px;
    background: linear-gradient(#d0d2de, #9ca0b2);
    color: #000;
    font: bold 9px/7px "DejaVu Sans", sans-serif;
}

.spin button + button {
    margin-top: 1px;
}

.knob.centred {
    margin-left: 9px;
}

.bypass {
    width: 34px;
    height: 18px;
    margin-left: 5px;
    border: 1px solid #c4c8d2;
    background: #ff8484;
    box-shadow: inset 0 0 0 1px #555a68, inset 0 0 0 2px #000;
    color: #1a0000;
    font: bold 8px "DejaVu Sans", sans-serif;
}

.checks {
    display: flex;
    width: 174px;
    margin: 3px 0 0 46px;
    font: bold 7px/12px "DejaVu Sans", sans-serif;
    white-space: nowrap;
}

.checks label {
    display: flex;
    flex: none;
    width: 90px;
}

.checks input {
    appearance: none;
    flex: none;
    width: 15px;
    height: 15px;
    margin: 0;
    border: 1px solid #c4c8d2;
    background: #666b7c;
}

.checks input:checked {
    background: linear-gradient(45deg, transparent 42%, #fff 42% 58%, transparent 58%), linear-gradient(135deg, #555a68 42%, #fff 42% 58%, #555a68 58%);
}

.ranges {
    display: grid;
    grid-template-columns: 111px 66px 66px;
    padding-left: 6px;
}

.range .stepper {
    height: 25px;
}

.range .plate {
    display: block;
    width: 66px;
    margin: 0;
}

.rack-foot {
    height: 9px;
    background: linear-gradient(#555a68 4px, #000 4px 5px, #808597 5px 8px, #000 8px);
}

/* task bar */
.taskbar {
    display: flex;
    height: 50px;
    background: repeating-linear-gradient(174deg, #0a0a0a 0 14px, #1a1a1a 22px 26px, #0e0e0e 40px);
    border-top: 1px solid #04200a;
    font-family: "Open Sans", "Noto Sans", sans-serif;
    font-size: 14px;
}

.taskbar button {
    display: flex;
    align-items: center;
    justify-content: center;
}

.sys {
    width: 60px;
}

.apps {
    display: flex;
    flex: 1;
    margin-left: 3px;
}

.app {
    width: 62px;
    border-bottom: 3px solid transparent;
}

.running {
    background: linear-gradient(#62b65c, #62b65c) center bottom / 51px 3px no-repeat border-box;
}

.running.more {
    background: linear-gradient(90deg, #62b65c 40px, #468744 40px) center bottom / 51px 3px no-repeat border-box;
}

.running.more.current {
    background: linear-gradient(90deg, #62b65c 57px, #468744 57px) center bottom / 100% 3px no-repeat border-box, linear-gradient(90deg, #484848 57px, #333 57px) border-box;
}

.tray {
    display: flex;
    padding-right: 5px;
}

.tray > button {
    width: 30px;
}

.tray svg {
    fill: none;
    stroke: #fff;
}

.time {
    display: flex;
    flex-direction: column;
    justify-content: center;
    width: 92px;
    padding-bottom: 2px;
    line-height: 23px;
    text-align: center;
}

.tray .notify {
    position: relative;
    width: 61px;
    padding-right: 9px;
    border-right: 1px solid #555;
}

.notify svg {
    margin-bottom: 4px;
}

.badge {
    position: absolute;
    left: 25px;
    top: 23px;
    width: 21px;
    height: 21px;
    border: 1px solid #999;
    border-radius: 50%;
    background: #2a2a2a;
    line-height: 19px;
}
```

FILE: script.js
```js
const instruments = [
    "Kick", "Stick", "Snare Jazz", "Hand Clap", "Snare Rock", "Tom Low", "Closed HH", "Tom Mid",
    "Pedal HH", "Tom Hi", "Open HH", "Cowbell", "Ride Jazz", "Crash", "Ride Rock", "Crash Jazz"
];

const bars = document.getElementById("bars");
for (let bar = 1; bar <= 105; bar += 4) {
    bars.innerHTML += `<div><span>${bar}</span></div>`;
}

const patterns = document.getElementById("patterns");
const songGrid = document.getElementById("song-grid");
for (let i = 1; i <= 10; i++) {
    patterns.innerHTML += `<li class="${i === 1 ? "active" : ""}">Pattern ${i}</li>`;
    songGrid.innerHTML += `<div class="song-row">${i === 1 ? '<i class="cell"></i>' : ""}</div>`;
}

const beats = document.getElementById("beats");
for (let i = 1; i <= 10; i++) {
    beats.innerHTML += `<span>${i}</span>`;
}

const list = document.getElementById("instruments");
const notes = document.getElementById("notes");
instruments.forEach((name, i) => {
    list.innerHTML += `<li class="${i === 0 ? "active" : ""}"><span>${name}</span><button>M</button><button>S</button></li>`;
    notes.innerHTML += '<div class="note-row"></div>';
});
```
